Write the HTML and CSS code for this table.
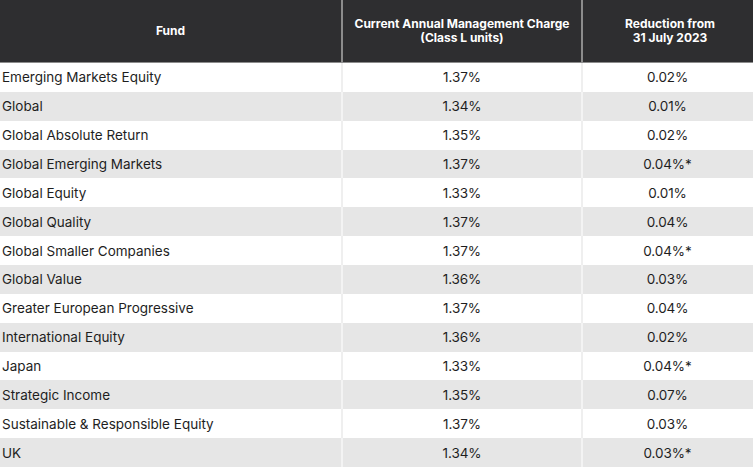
FILE: index.html
```html
<!DOCTYPE html>
<html>
<head>
<meta charset="utf-8">
<link rel="stylesheet" href="styles.css">
</head>
<body>
<table class="fees">
  <thead>
    <tr>
      <th class="col-fund">Fund</th>
      <th class="col-amc">Current Annual Management Charge<br>(Class L units)</th>
      <th class="col-red">Reduction from<br>31 July 2023</th>
    </tr>
  </thead>
  <tbody>
    <tr><td>Emerging Markets Equity</td><td>1.37%</td><td>0.02%</td></tr>
    <tr><td>Global</td><td>1.34%</td><td>0.01%</td></tr>
    <tr><td>Global Absolute Return</td><td>1.35%</td><td>0.02%</td></tr>
    <tr><td>Global Emerging Markets</td><td>1.37%</td><td>0.04%*</td></tr>
    <tr><td>Global Equity</td><td>1.33%</td><td>0.01%</td></tr>
    <tr><td>Global Quality</td><td>1.37%</td><td>0.04%</td></tr>
    <tr><td>Global Smaller Companies</td><td>1.37%</td><td>0.04%*</td></tr>
    <tr><td>Global Value</td><td>1.36%</td><td>0.03%</td></tr>
    <tr><td>Greater European Progressive</td><td>1.37%</td><td>0.04%</td></tr>
    <tr><td>International Equity</td><td>1.36%</td><td>0.02%</td></tr>
    <tr><td>Japan</td><td>1.33%</td><td>0.04%*</td></tr>
    <tr><td>Strategic Income</td><td>1.35%</td><td>0.07%</td></tr>
    <tr><td>Sustainable &amp; Responsible Equity</td><td>1.37%</td><td>0.03%</td></tr>
    <tr><td>UK</td><td>1.34%</td><td>0.03%*</td></tr>
  </tbody>
</table>
</body>
</html>
```
FILE: styles.css
```css
html, body {
  margin: 0;
  padding: 0;
  background: #ffffff;
}
body {
  font-family: Inter, "Noto Sans", sans-serif;
  color: #1e1e1e;
}
.fees {
  width: 753px;
  border-collapse: collapse;
  table-layout: fixed;
}
.col-fund { width: 341px; }
.col-amc { width: 238px; }
.col-red { width: 174px; }
.fees th {
  background: #2e2e30;
  color: #ffffff;
  font-size: 12px;
  font-weight: 700;
  letter-spacing: 0;
  line-height: 14px;
  height: 62px;
  padding: 0;
  text-align: center;
  vertical-align: middle;
  border-right: 2px solid #8c8c8c;
  border-bottom: 1px solid #8c8c8c;
}
.fees td {
  font-size: 13.5px;
  letter-spacing: -0.1px;
  height: 28.86px;
  padding: 0;
  border-right: 2px solid #efefef;
  text-align: center;
  vertical-align: middle;
}
.fees td:first-child {
  text-align: left;
  padding-left: 2px;
  letter-spacing: 0;
}
.fees td:last-child {
  padding-right: 5px;
}
.fees tbody tr:nth-child(even) td {
  background: #e6e6e6;
  border-right-color: #f3f3f3;
}
```
